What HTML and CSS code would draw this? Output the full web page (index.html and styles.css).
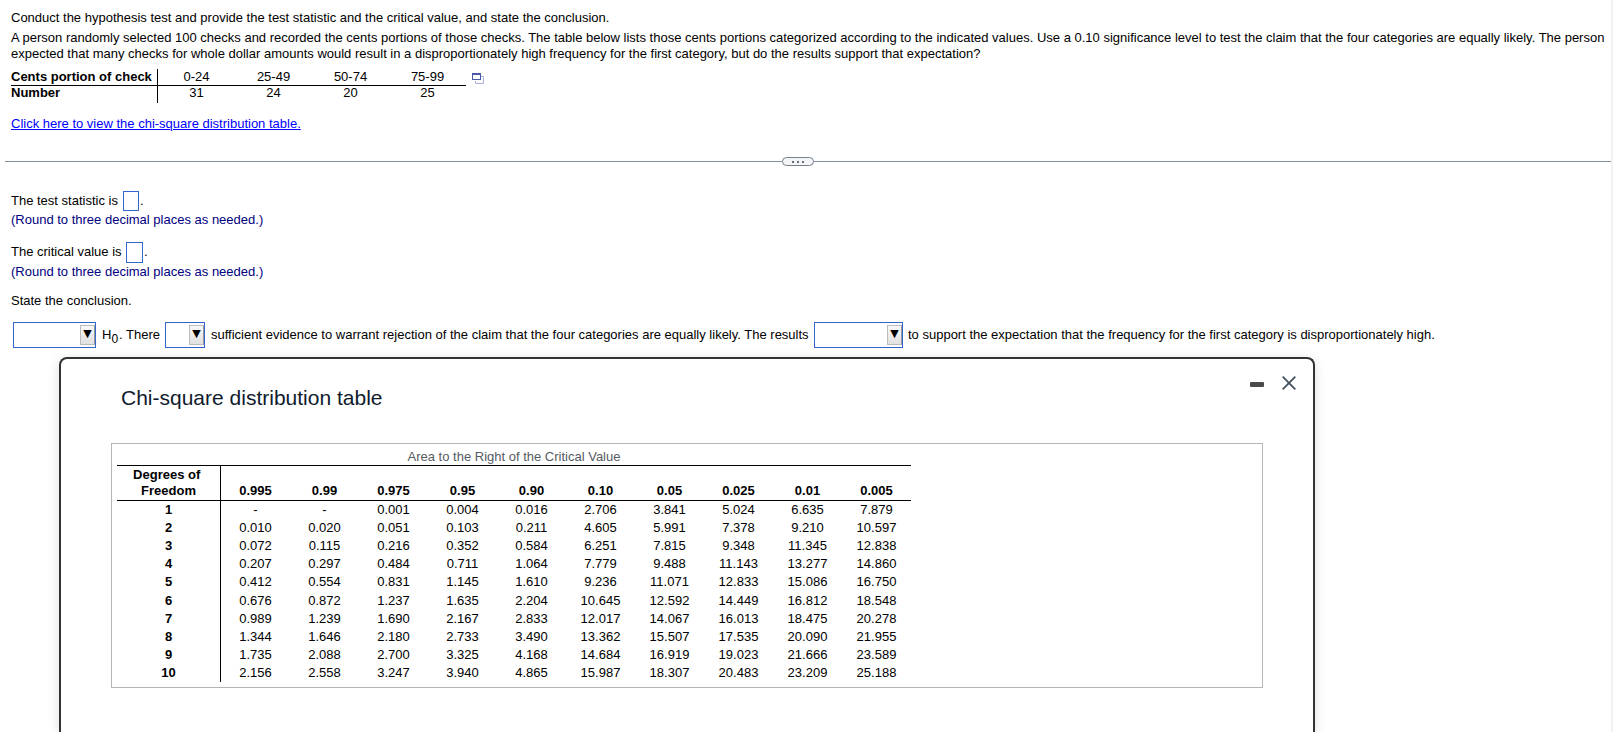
FILE: index.html
```
<!DOCTYPE html>
<html lang="en">
<head>
    <meta charset="UTF-8">
    <title>Chi-square hypothesis test</title>
    <link rel="stylesheet" href="styles.css">
</head>
<body>
    <main class="page">
        <section class="question">
            <p class="intro">Conduct the hypothesis test and provide the test statistic and the critical value, and state the conclusion.</p>
            <p class="problem">
                <span class="line1">A person randomly selected 100 checks and recorded the cents portions of those checks. The table below lists those cents portions categorized according to the indicated values. Use a 0.10 significance level to test the claim that the four categories are equally likely. The person</span><br>
                <span class="line2">expected that many checks for whole dollar amounts would result in a disproportionately high frequency for the first category, but do the results support that expectation?</span>
            </p>
            <div class="data">
                <table class="cents">
                    <tr><th><span>Cents portion of check</span></th><td>0-24</td><td>25-49</td><td>50-74</td><td>75-99</td></tr>
                    <tr><th><span>Number</span></th><td>31</td><td>24</td><td>20</td><td>25</td></tr>
                </table>
                <svg class="copy-icon" width="12" height="11" viewBox="0 0 12 11">
                    <path d="M9 3.5h2.5v7h-8V8" fill="none" stroke="#a9afd6"/>
                    <rect x="0.5" y="0.5" width="8" height="6" fill="#fff" stroke="#4a5aa8"/>
                    <path d="M0 1h9" stroke="#4a5aa8" stroke-width="2"/>
                </svg>
            </div>
            <a class="table-link" href="#">Click here to view the chi-square distribution table.</a>
        </section>

        <div class="divider">
            <span class="rule rule-left"></span>
            <span class="handle"><i></i><i></i><i></i></span>
            <span class="rule"></span>
        </div>

        <section class="answer">
            <div class="row stat"><span class="w-stat">The test statistic is</span><span class="box"></span><span>.</span></div>
            <p class="hint">(Round to three decimal places as needed.)</p>
            <div class="row crit"><span class="w-crit">The critical value is</span><span class="box box-crit"></span><span>.</span></div>
            <p class="hint">(Round to three decimal places as needed.)</p>
            <p class="state">State the conclusion.</p>
            <div class="row conclusion">
                <span class="select select-a"><b>▼</b></span>
                <span class="t-h0">H<sub>0</sub>. There</span>
                <span class="select select-b"><b>▼</b></span>
                <span class="t-mid">sufficient evidence to warrant rejection of the claim that the four categories are equally likely. The results</span>
                <span class="select select-c"><b>▼</b></span>
                <span class="t-end">to support the expectation that the frequency for the first category is disproportionately high.</span>
            </div>
        </section>
    </main>
    <div class="scroll-edge"></div>

    <div class="dialog">
        <header class="dialog-head">
            <h2>Chi-square distribution table</h2>
            <div class="tools">
                <span class="minimize"></span>
                <svg width="14" height="14" viewBox="0 0 14 14"><path d="M0.7 0.7l12.6 12.6M13.3 0.7L0.7 13.3" fill="none" stroke="#44525f" stroke-width="1.8"/></svg>
            </div>
        </header>
        <div class="frame">
            <table class="chi">
                <caption>Area to the Right of the Critical Value</caption>
                <thead>
                    <tr><th>Degrees of&nbsp;<br>Freedom</th><th>0.995</th><th>0.99</th><th>0.975</th><th>0.95</th><th>0.90</th><th>0.10</th><th>0.05</th><th>0.025</th><th>0.01</th><th>0.005</th></tr>
                </thead>
                <tbody>
                    <tr><th>1</th><td>-</td><td>-</td><td>0.001</td><td>0.004</td><td>0.016</td><td>2.706</td><td>3.841</td><td>5.024</td><td>6.635</td><td>7.879</td></tr>
                    <tr><th>2</th><td>0.010</td><td>0.020</td><td>0.051</td><td>0.103</td><td>0.211</td><td>4.605</td><td>5.991</td><td>7.378</td><td>9.210</td><td>10.597</td></tr>
                    <tr><th>3</th><td>0.072</td><td>0.115</td><td>0.216</td><td>0.352</td><td>0.584</td><td>6.251</td><td>7.815</td><td>9.348</td><td>11.345</td><td>12.838</td></tr>
                    <tr><th>4</th><td>0.207</td><td>0.297</td><td>0.484</td><td>0.711</td><td>1.064</td><td>7.779</td><td>9.488</td><td>11.143</td><td>13.277</td><td>14.860</td></tr>
                    <tr class="tall"><th>5</th><td>0.412</td><td>0.554</td><td>0.831</td><td>1.145</td><td>1.610</td><td>9.236</td><td>11.071</td><td>12.833</td><td>15.086</td><td>16.750</td></tr>
                    <tr><th>6</th><td>0.676</td><td>0.872</td><td>1.237</td><td>1.635</td><td>2.204</td><td>10.645</td><td>12.592</td><td>14.449</td><td>16.812</td><td>18.548</td></tr>
                    <tr><th>7</th><td>0.989</td><td>1.239</td><td>1.690</td><td>2.167</td><td>2.833</td><td>12.017</td><td>14.067</td><td>16.013</td><td>18.475</td><td>20.278</td></tr>
                    <tr><th>8</th><td>1.344</td><td>1.646</td><td>2.180</td><td>2.733</td><td>3.490</td><td>13.362</td><td>15.507</td><td>17.535</td><td>20.090</td><td>21.955</td></tr>
                    <tr><th>9</th><td>1.735</td><td>2.088</td><td>2.700</td><td>3.325</td><td>4.168</td><td>14.684</td><td>16.919</td><td>19.023</td><td>21.666</td><td>23.589</td></tr>
                    <tr><th>10</th><td>2.156</td><td>2.558</td><td>3.247</td><td>3.940</td><td>4.865</td><td>15.987</td><td>18.307</td><td>20.483</td><td>23.209</td><td>25.188</td></tr>
                </tbody>
            </table>
        </div>
    </div>
</body>
</html>
```
FILE: styles.css
```
* {
    box-sizing: border-box;
}
html, body {
    margin: 0;
    padding: 0;
    height: 100%;
    overflow: hidden;
}
body {
    display: flex;
    background: #fff;
    color: #000;
    font-family: "Liberation Sans", Arial, sans-serif;
    font-size: 13px;
    line-height: 16px;
    white-space: nowrap;
}
p, h2 {
    margin: 0;
}
.page {
    width: 1611px;
    flex: none;
}
.scroll-edge {
    flex: 1;
    background: #f1f1f1;
}

/* question */
.question {
    height: 157px;
    padding: 10px 0 0 11px;
}
.problem {
    margin-top: 4px;
}
.data {
    display: flex;
    align-items: flex-start;
    gap: 6px;
    height: 34px;
    margin-top: 7px;
}
table {
    border-collapse: separate;
    border-spacing: 0;
    table-layout: fixed;
}
th, td {
    padding: 0;
    text-align: center;
}
.cents {
    width: 455px;
}
.cents th {
    width: 147px;
    text-align: left;
    border-right: 1px solid #000;
}
.cents tr:first-child th, .cents tr:first-child td {
    border-bottom: 1px solid #000;
}
.cents tr {
    height: 17px;
}
.cents tr:last-child th, .cents tr:last-child td {
    padding-bottom: 3px;
    line-height: 14px;
}
.copy-icon {
    margin-top: 4px;
}
.table-link {
    display: inline-block;
    margin-top: 13px;
    color: #0000ff;
}

/* divider with drag handle */
.divider {
    display: flex;
    align-items: center;
    height: 9px;
    padding-left: 5px;
}
.rule {
    flex: 1;
    height: 1px;
    background: #868ea3;
}
.rule-left {
    flex: 0 0 777px;
}
.handle {
    display: flex;
    align-items: center;
    justify-content: center;
    gap: 3px;
    width: 32px;
    height: 9px;
    border: 1px solid #74828f;
    border-radius: 5px;
    background: #f3f4f6;
}
.handle i {
    width: 2px;
    height: 2px;
    background: #6b6f78;
}

/* answer */
.answer {
    padding: 25px 0 0 11px;
}
.row {
    display: flex;
}
.stat, .crit {
    line-height: 20px;
}
.stat {
    height: 21px;
}
.crit {
    height: 22px;
    margin-top: 14px;
}
.w-stat {
    width: 112px;
}
.w-crit {
    width: 115px;
}
.box {
    width: 16px;
    height: 20px;
    margin-right: 1px;
    border: 1px solid #3366cc;
}
.box-crit {
    width: 17px;
    height: 21px;
}
.hint {
    color: #000080;
}
.state {
    margin-top: 13px;
}
.conclusion {
    height: 26px;
    margin: 13px 0 0 2px;
    line-height: 25px;
}
.t-h0 {
    width: 69px;
    padding-left: 6px;
}
.t-h0 sub {
    margin-right: 1px;
    font-size: 12px;
    line-height: 0;
    vertical-align: -4px;
}
.t-mid {
    width: 609px;
    padding-left: 6px;
}
.t-end {
    padding-left: 5px;
}
.select {
    display: flex;
    justify-content: flex-end;
    height: 26px;
    padding-top: 2px;
    border: 1px solid #3366cc;
}
.select b {
    width: 15px;
    height: 20px;
    border: 1px solid #bbb;
    border-right-color: #999;
    background: linear-gradient(#f8f8f8, #e0e0e0);
    font: 11px/15px "DejaVu Sans", sans-serif;
    text-align: center;
}
.select-a {
    width: 83px;
}
.select-b {
    width: 40px;
}
.select-c {
    width: 89px;
}

/* dialog floating over the page, runs off the bottom of the window */
.dialog {
    position: absolute;
    left: 59px;
    top: 357px;
    bottom: 0;
    width: 1256px;
    padding: 0 50px;
    border: 2px solid #333;
    border-bottom: 0;
    border-radius: 8px 8px 0 0;
    background: #fff;
    box-shadow: 0 2px 12px rgba(0, 0, 0, 0.13);
}
.dialog-head {
    display: flex;
    justify-content: space-between;
    height: 84px;
    padding: 26px 0 0 10px;
}
.dialog-head h2 {
    color: #0f1b2d;
    font-size: 21px;
    font-weight: normal;
    line-height: 26px;
}
.tools {
    display: flex;
    gap: 18px;
    margin: -9px -33px 0 0;
}
.minimize {
    width: 14px;
    height: 5px;
    margin-top: 6px;
    border-radius: 1px;
    background: #4a4a4a;
}
.frame {
    height: 245px;
    padding: 5px;
    border: 1px solid #b5b5b5;
}
.chi {
    width: 794px;
}
.chi caption {
    height: 16px;
    color: #555b63;
    line-height: 15px;
}
.chi thead th {
    height: 36px;
    padding-bottom: 1px;
    border-top: 1px solid #000;
    border-bottom: 1px solid #000;
    vertical-align: bottom;
    line-height: 16px;
}
.chi th:first-child {
    width: 104px;
    border-right: 1px solid #000;
}
.chi tbody tr {
    height: 18px;
}
.chi tbody .tall {
    height: 19px;
}
.chi tbody .tall th, .chi tbody .tall td {
    padding-bottom: 1px;
}
```
